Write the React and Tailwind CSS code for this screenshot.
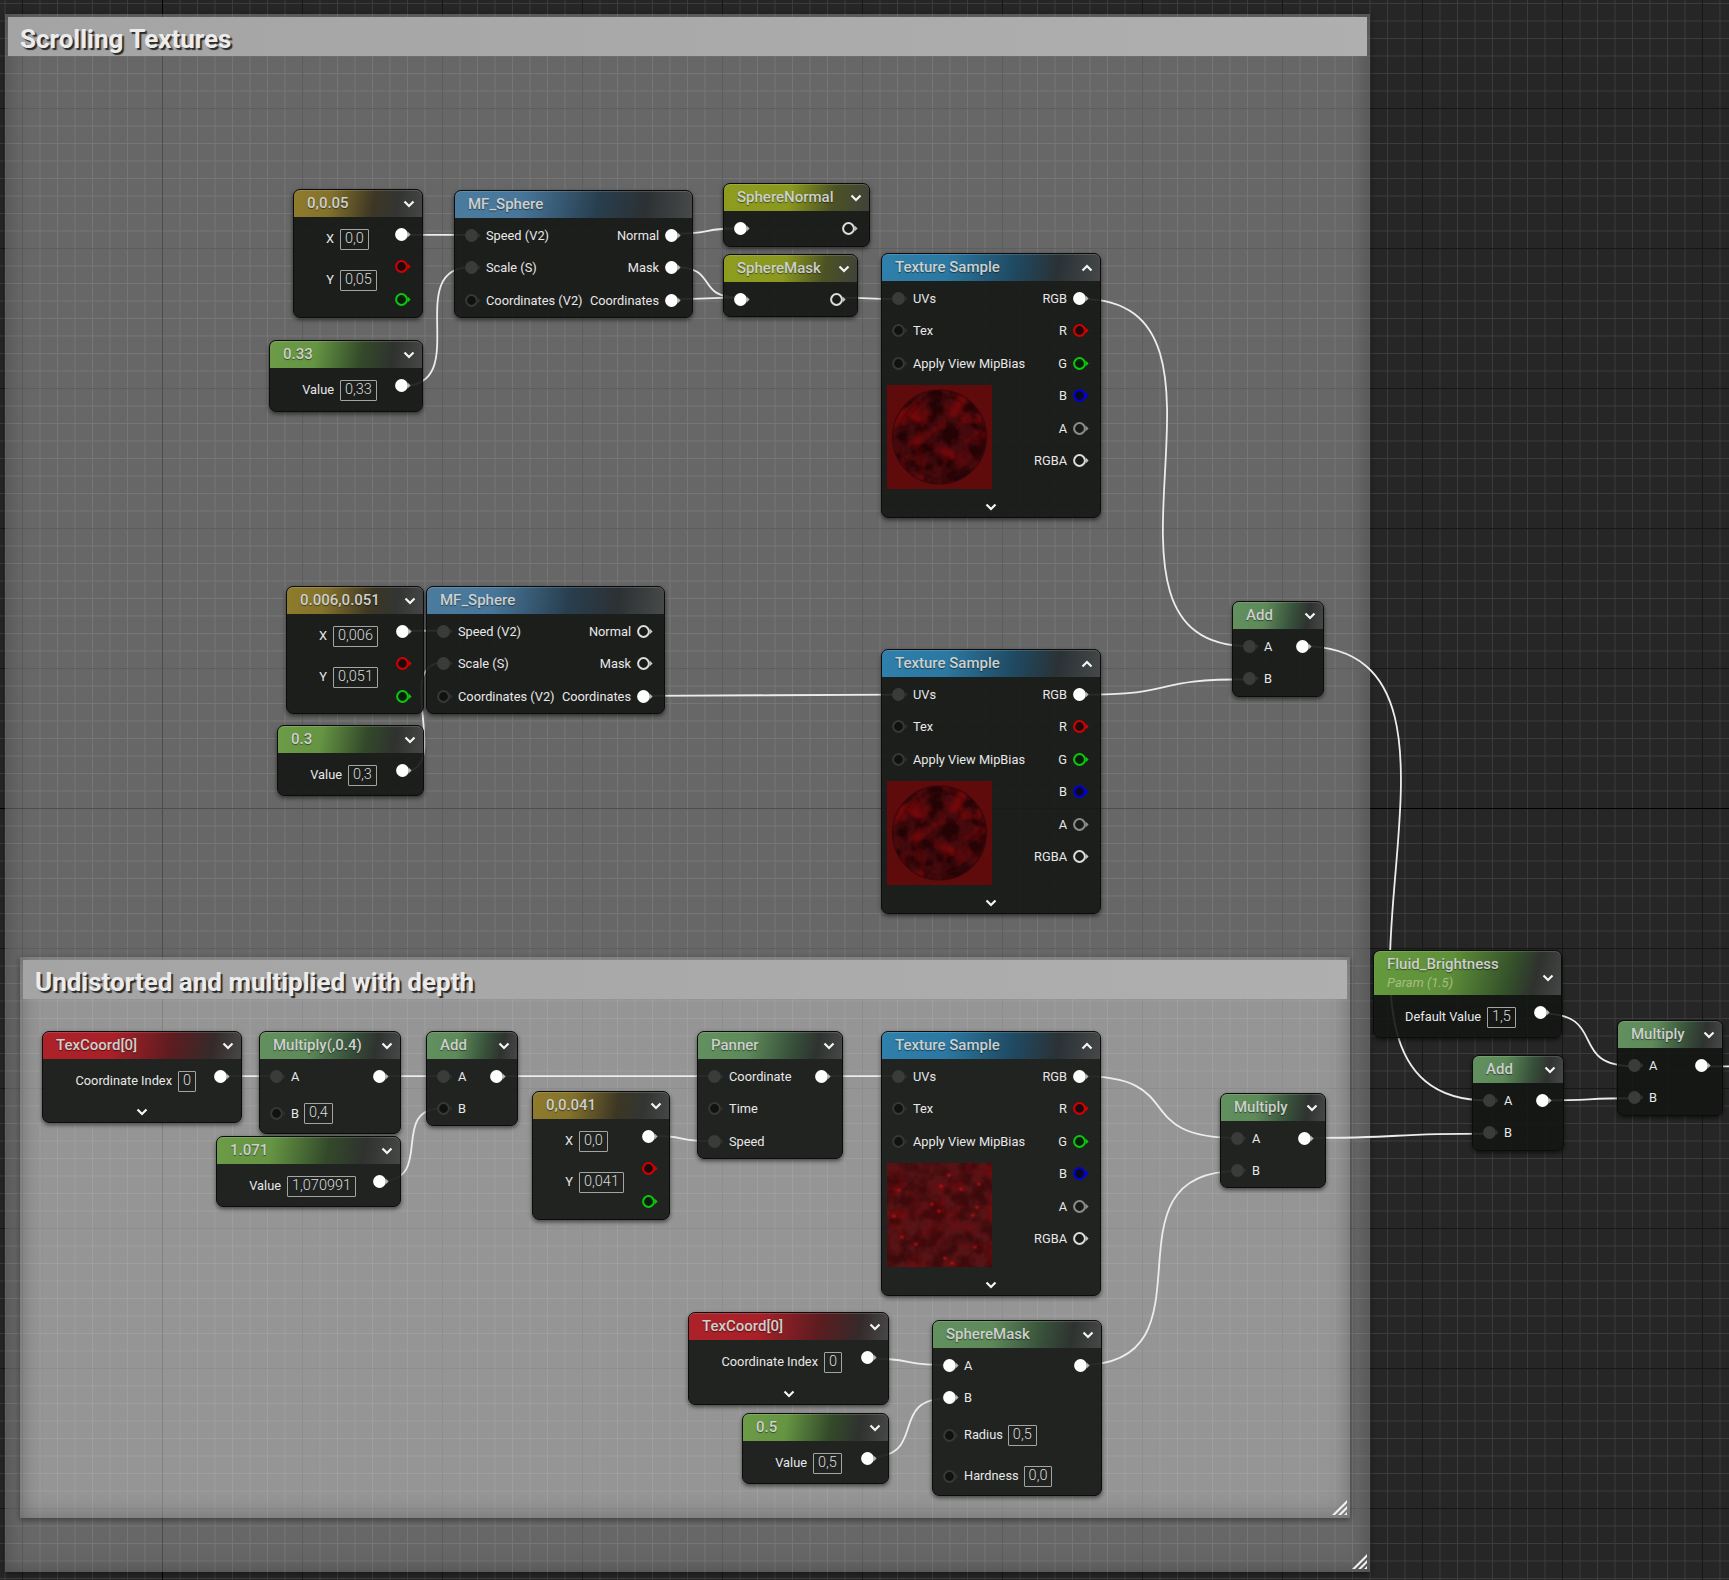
import React from 'react';

const pinStyles = {
  white: { fill: '#ffffff', stroke: '#ffffff', nub: '#b5b5b5' },
  ring: { fill: '#191b1a', stroke: '#dcdcdc', nub: '#c4c4c4' },
  red: { fill: '#1c0a0a', stroke: '#d40000', nub: '#d40000' },
  green: { fill: '#0a1c0a', stroke: '#0cc80c', nub: '#0cc80c' },
  blue: { fill: '#0a0a1c', stroke: '#0000dc', nub: '#0000dc' },
  gray: { fill: '#191b1a', stroke: '#8c8c8c', nub: '#8c8c8c' },
  dim: { fill: '#3a3c3b', stroke: '#3a3c3b', nub: '#2e302f' },
  dark: { fill: '#101211', stroke: '#363837', nub: '#2e302f' },
};

const headerStyles = {
  yellow: 'bg-[linear-gradient(100deg,#8f7c2c_0%,#84722c_28%,#3c3624_62%,#333533_80%,#454746_100%)]',
  green: 'bg-[linear-gradient(100deg,#6c9c48_0%,#659442_30%,#334a2a_60%,#2f322e_80%,#464847_100%)]',
  olive: 'bg-[linear-gradient(100deg,#8e9c1e_0%,#8a9820_45%,#4c5224_75%,#3f423a_100%)]',
  steel: 'bg-[linear-gradient(100deg,#4b7c9e_0%,#47769a_28%,#283e4e_60%,#2c3134_80%,#484a4a_100%)]',
  blue: 'bg-[linear-gradient(100deg,#2f80ab_0%,#2b78a2_30%,#1f4a62_60%,#2a3236_80%,#464848_100%)]',
  red: 'bg-[linear-gradient(100deg,#ad2229_0%,#a82028_35%,#5c1c20_65%,#352a2a_85%,#474747_100%)]',
  math: 'bg-[linear-gradient(100deg,#62905e_0%,#5e8a5a_35%,#37503a_65%,#2f3330_82%,#464847_100%)]',
  param: 'bg-[linear-gradient(105deg,#659a3e_0%,#5f9039_40%,#33502a_72%,#2f322e_85%,#454746_100%)]',
};

const X = 'w-[40px]';
const V = 'w-[64px]';

const texOuts = [
  { label: 'RGB', pin: 'white' },
  { label: 'R', pin: 'red' },
  { label: 'G', pin: 'green' },
  { label: 'B', pin: 'blue' },
  { label: 'A', pin: 'gray' },
  { label: 'RGBA', pin: 'ring' },
];

const texIns = [
  { pin: 'dim', label: 'UVs' },
  { pin: 'dark', label: 'Tex' },
  { pin: 'dark', label: 'Apply View MipBias' },
];

const nodes = [
  { title: '0,0.05', color: 'yellow', box: 'left-[293px] top-[189px] w-[130px] h-[129px]',
    left: [{ label: 'X', value: '0,0', w: X }, { label: 'Y', value: '0,05', w: X }],
    right: [{ pin: 'white' }, { pin: 'red' }, { pin: 'green' }] },
  { title: '0.33', color: 'green', box: 'left-[269px] top-[340px] w-[154px] h-[72px]',
    left: [{ label: 'Value', value: '0,33', w: V }], right: [{ pin: 'white' }] },
  { title: 'MF_Sphere', color: 'steel', noArrow: true, box: 'left-[454px] top-[190px] w-[239px] h-[128px]',
    left: [{ pin: 'dim', label: 'Speed (V2)' }, { pin: 'dim', label: 'Scale (S)' }, { pin: 'dark', label: 'Coordinates (V2)' }],
    right: [{ label: 'Normal', pin: 'white' }, { label: 'Mask', pin: 'white' }, { label: 'Coordinates', pin: 'white' }] },
  { title: 'SphereNormal', color: 'olive', box: 'left-[723px] top-[183px] w-[147px] h-[64px]',
    left: [{ pin: 'white' }], right: [{ pin: 'ring' }] },
  { title: 'SphereMask', color: 'olive', box: 'left-[723px] top-[254px] w-[135px] h-[63px]',
    left: [{ pin: 'white' }], right: [{ pin: 'ring' }] },
  { title: 'Texture Sample', color: 'blue', up: true, more: true, preview: 'sphere', box: 'left-[881px] top-[253px] w-[220px] h-[265px]',
    left: texIns, right: texOuts },

  { title: '0.006,0.051', color: 'yellow', box: 'left-[286px] top-[586px] w-[138px] h-[128px]',
    left: [{ label: 'X', value: '0,006', w: X }, { label: 'Y', value: '0,051', w: X }],
    right: [{ pin: 'white' }, { pin: 'red' }, { pin: 'green' }] },
  { title: 'MF_Sphere', color: 'steel', noArrow: true, box: 'left-[426px] top-[586px] w-[239px] h-[128px]',
    left: [{ pin: 'dim', label: 'Speed (V2)' }, { pin: 'dim', label: 'Scale (S)' }, { pin: 'dark', label: 'Coordinates (V2)' }],
    right: [{ label: 'Normal', pin: 'ring' }, { label: 'Mask', pin: 'ring' }, { label: 'Coordinates', pin: 'white' }] },
  { title: '0.3', color: 'green', box: 'left-[277px] top-[725px] w-[147px] h-[71px]',
    left: [{ label: 'Value', value: '0,3', w: V }], right: [{ pin: 'white' }] },
  { title: 'Texture Sample', color: 'blue', up: true, more: true, preview: 'sphere', box: 'left-[881px] top-[649px] w-[220px] h-[265px]',
    left: texIns, right: texOuts },
  { title: 'Add', color: 'math', box: 'left-[1232px] top-[601px] w-[92px] h-[96px]',
    left: [{ pin: 'dim', label: 'A' }, { pin: 'dim', label: 'B' }], right: [{ pin: 'white' }] },

  { title: 'Fluid_Brightness', subtitle: 'Param (1.5)', color: 'param', box: 'left-[1373px] top-[950px] w-[189px] h-[88px]',
    left: [{ label: 'Default Value', value: '1,5', w: 'w-[107px]' }], right: [{ pin: 'white' }] },
  { title: 'TexCoord[0]', color: 'red', more: true, box: 'left-[42px] top-[1031px] w-[200px] h-[92px]',
    left: [{ label: 'Coordinate Index', value: '0', w: 'w-[129px]' }], right: [{ pin: 'white' }] },
  { title: 'Multiply(,0.4)', color: 'math', box: 'left-[259px] top-[1031px] w-[142px] h-[103px]',
    left: [{ pin: 'dim', label: 'A' }, { pin: 'dark', label: 'B', value: '0,4' }], right: [{ pin: 'white' }] },
  { title: '1.071', color: 'green', box: 'left-[216px] top-[1136px] w-[185px] h-[71px]',
    left: [{ label: 'Value', value: '1,070991', w: V }], right: [{ pin: 'white' }] },
  { title: 'Add', color: 'math', box: 'left-[426px] top-[1031px] w-[92px] h-[95px]',
    left: [{ pin: 'dim', label: 'A' }, { pin: 'dark', label: 'B' }], right: [{ pin: 'white' }] },
  { title: '0,0.041', color: 'yellow', box: 'left-[532px] top-[1091px] w-[138px] h-[129px]',
    left: [{ label: 'X', value: '0,0', w: X }, { label: 'Y', value: '0,041', w: X }],
    right: [{ pin: 'white' }, { pin: 'red' }, { pin: 'green' }] },
  { title: 'Panner', color: 'math', box: 'left-[697px] top-[1031px] w-[146px] h-[128px]',
    left: [{ pin: 'dim', label: 'Coordinate' }, { pin: 'dark', label: 'Time' }, { pin: 'dim', label: 'Speed' }], right: [{ pin: 'white' }] },
  { title: 'Texture Sample', color: 'blue', up: true, more: true, preview: 'mottled', box: 'left-[881px] top-[1031px] w-[220px] h-[265px]',
    left: texIns, right: texOuts },
  { title: 'Multiply', color: 'math', box: 'left-[1220px] top-[1093px] w-[106px] h-[95px]',
    left: [{ pin: 'dim', label: 'A' }, { pin: 'dim', label: 'B' }], right: [{ pin: 'white' }] },
  { title: 'Add', color: 'math', box: 'left-[1472px] top-[1055px] w-[92px] h-[96px]',
    left: [{ pin: 'dim', label: 'A' }, { pin: 'dim', label: 'B' }], right: [{ pin: 'white' }] },
  { title: 'Multiply', color: 'math', box: 'left-[1617px] top-[1020px] w-[106px] h-[96px]',
    left: [{ pin: 'dim', label: 'A' }, { pin: 'dim', label: 'B' }], right: [{ pin: 'white' }] },
  { title: 'TexCoord[0]', color: 'red', more: true, box: 'left-[688px] top-[1312px] w-[201px] h-[93px]',
    left: [{ label: 'Coordinate Index', value: '0', w: 'w-[129px]' }], right: [{ pin: 'white' }] },
  { title: '0.5', color: 'green', box: 'left-[742px] top-[1413px] w-[147px] h-[71px]',
    left: [{ label: 'Value', value: '0,5', w: V }], right: [{ pin: 'white' }] },
  { title: 'SphereMask', color: 'math', box: 'left-[932px] top-[1320px] w-[170px] h-[176px]',
    left: [{ pin: 'white', label: 'A' }, { pin: 'white', label: 'B' }, { pin: 'dark', label: 'Radius', value: '0,5' }, { pin: 'dark', label: 'Hardness', value: '0,0' }],
    right: [{ pin: 'white' }] },
];

// wire ends were measured on the 1568px wide overview, k brings them to page pixels
const k = 1729 / 1568;
const wires = [
  [365, 213, 428, 213], [365, 350, 428, 242], [610, 212, 672, 207], [610, 242, 672, 270],
  [610, 271, 672, 270], [760, 270, 815, 271], [980, 271, 1133, 586], [365, 572, 402, 572],
  [365, 700, 402, 601], [584, 631, 815, 630], [980, 630, 1133, 616], [1181, 586, 1350, 998],
  [1397, 919, 1483, 967], [1399, 998, 1483, 996], [1183, 1032, 1350, 1028], [200, 976, 251, 976],
  [345, 976, 402, 976], [345, 1071, 402, 1005], [450, 976, 648, 976], [589, 1030, 648, 1035],
  [745, 976, 815, 976], [980, 976, 1122, 1032], [786, 1232, 861, 1238], [786, 1322, 861, 1268],
  [980, 1238, 1122, 1062], [1543, 967, 1575, 967],
];

// bright specks on the lower texture preview
const specks = [
  [62, 12], [54, 23], [74, 26], [92, 21], [52, 48], [90, 44], [86, 52], [7, 53], [12, 27],
  [29, 81], [58, 95], [65, 100], [88, 84], [15, 74], [45, 41],
];

const wirePath = ([x1, y1, x2, y2]) => {
  const d = (Math.abs(x2 - x1) * 0.6 + Math.abs(y2 - y1) * 0.25) * k;
  const [a, b, c, e] = [x1 * k, y1 * k, x2 * k, y2 * k];
  return `M${a} ${b}C${a + d} ${b} ${c - d} ${e} ${c} ${e}`;
};

const Pin = ({ kind }) => {
  const s = pinStyles[kind];
  return (
    <svg width="16" height="13" viewBox="0 0 16 13" className="shrink-0">
      <circle cx="6.5" cy="6.5" r="5.4" fill={s.fill} stroke={s.stroke} strokeWidth="2" />
      <path d="M12.6 3.6L15.6 6.5L12.6 9.4Z" fill={s.nub} />
    </svg>
  );
};

const Chevron = ({ up, className }) => (
  <svg width="12" height="8" viewBox="0 0 12 8" className={className}>
    <path d={up ? 'M1.5 6.5L6 2L10.5 6.5' : 'M1.5 1.5L6 6L10.5 1.5'} fill="none" stroke="#f4f4f4" strokeWidth="2.2" />
  </svg>
);

const ValueBox = ({ value }) => (
  <span className="flex h-[21px] items-center rounded-[1px] border border-[#a4a4a4] px-[4px] text-[14.5px] font-light leading-none text-[#dadada]">
    {value}
  </span>
);

const LeftRow = ({ pin, label, value, w }) => (
  <div className={`flex items-center ${value ? 'h-[41px] pt-[1px]' : 'h-[32.5px]'} ${pin ? 'gap-[5px] pl-[10px]' : 'gap-[6px]'}`}>
    {pin && <Pin kind={pin} />}
    {label && <span className={`whitespace-nowrap text-[12.8px] text-[#e8e8e8] ${w ? `${w} text-right` : ''}`}>{label}</span>}
    {value && <ValueBox value={value} />}
  </div>
);

const RightRow = ({ pin, label }) => (
  <div className="flex h-[32.5px] items-center gap-[6px] pr-[11px]">
    {label && <span className="whitespace-nowrap text-[12.8px] text-[#e8e8e8]">{label}</span>}
    <Pin kind={pin} />
  </div>
);

const Preview = ({ kind }) => {
  const sphere = kind === 'sphere';
  const id = `noise-${kind}`;
  return (
    <svg width="105" height="104" viewBox="0 0 105 104" className="ml-[5px] mt-[5px] block">
      <defs>
        <filter id={`${id}-dark`} x="0" y="0" width="100%" height="100%" colorInterpolationFilters="sRGB">
          <feTurbulence type="fractalNoise" baseFrequency="0.07" numOctaves="3" seed={sphere ? 4 : 9} />
          <feColorMatrix values="0 0 0 0 0.14  0 0 0 0 0.01  0 0 0 0 0.02  3 0 0 0 -1.1" />
        </filter>
        <filter id={`${id}-red`} x="0" y="0" width="100%" height="100%" colorInterpolationFilters="sRGB">
          <feTurbulence type="fractalNoise" baseFrequency="0.05" numOctaves="3" seed={sphere ? 11 : 23} />
          <feColorMatrix values="0 0 0 0 0.5  0 0 0 0 0.03  0 0 0 0 0.04  3.4 0 0 0 -1.6" />
        </filter>
        <filter id={`${id}-soft`}>
          <feGaussianBlur stdDeviation="0.8" />
        </filter>
        <clipPath id={`${id}-clip`}>
          <circle cx="52.5" cy="52" r="47" />
        </clipPath>
      </defs>
      {sphere ? (
        <>
          <rect width="105" height="104" fill="#600b0b" />
          <circle cx="52.5" cy="52" r="47" fill="#460a0d" />
          <rect width="105" height="104" filter={`url(#${id}-dark)`} clipPath={`url(#${id}-clip)`} />
          <rect width="105" height="104" filter={`url(#${id}-red)`} clipPath={`url(#${id}-clip)`} opacity="0.8" />
          <circle cx="52.5" cy="52" r="47" fill="none" stroke="#360709" strokeWidth="1.5" opacity="0.7" />
          <circle cx="52.5" cy="52" r="41" fill="none" stroke="#3a0709" strokeWidth="1.2" opacity="0.45" />
        </>
      ) : (
        <>
          <rect width="105" height="104" fill="#571315" />
          <rect width="105" height="104" filter={`url(#${id}-red)`} opacity="0.55" />
          <rect width="105" height="104" filter={`url(#${id}-dark)`} opacity="0.5" />
          <g filter={`url(#${id}-soft)`}>
            {specks.map(([cx, cy], i) => <circle key={i} cx={cx} cy={cy} r="1.6" fill="#d01212" />)}
          </g>
        </>
      )}
    </svg>
  );
};

const Node = ({ node }) => (
  <div className={`absolute ${node.box} flex flex-col rounded-[7px] border border-[#0c0c0c] bg-[#141614]/90 shadow-[0_2px_4px_rgba(0,0,0,0.55)]`}>
    <div className={`flex shrink-0 items-center justify-between rounded-t-[6px] shadow-[inset_0_1px_0_rgba(255,255,255,0.14)] ${headerStyles[node.color]} ${node.subtitle ? 'h-[44px]' : 'h-[27px]'} pl-[13px] pr-[7px]`}>
      <div className="-mt-[1px] flex flex-col">
        <span className="whitespace-nowrap text-[15px] font-medium leading-[20px] text-[#cdd0cd] [text-shadow:0_1px_1px_rgba(0,0,0,0.5)]">{node.title}</span>
        {node.subtitle && <span className="text-[13px] italic leading-[18px] text-[#a4bd82]">{node.subtitle}</span>}
      </div>
      {!node.noArrow && <Chevron up={node.up} className={node.subtitle ? 'mt-[9px]' : ''} />}
    </div>
    <div className="flex justify-between pt-[1px]">
      <div className="flex flex-col">
        {node.left.map((row, i) => <LeftRow key={i} {...row} />)}
        {node.preview && <Preview kind={node.preview} />}
      </div>
      <div className="flex flex-col items-end">
        {node.right.map((row, i) => <RightRow key={i} {...row} />)}
      </div>
    </div>
    {node.more && (
      <div className="mt-auto flex justify-center pb-[6px]">
        <Chevron />
      </div>
    )}
  </div>
);

const Grip = () => (
  <svg width="15" height="15" viewBox="0 0 15 15" className="absolute bottom-[3px] right-[3px]">
    <path d="M0 15L15 0V3L3 15ZM6 15L15 6V9L9 15ZM12 15L15 12V15Z" fill="#f2f2f2" />
  </svg>
);

const Comment = ({ box, titleBox, title }) => (
  <div className={`absolute ${box} bg-white/30 shadow-[inset_0_0_22px_rgba(0,0,0,0.28),0_2px_6px_rgba(0,0,0,0.4)]`}>
    <div className={`mx-[3px] mt-[3px] flex items-center pt-[6px] ${titleBox} bg-[linear-gradient(90deg,#a4a4a4,#afafaf)]`}>
      <span className="whitespace-nowrap text-[26px] font-bold text-[#ececec] [text-shadow:2px_2px_1px_#2a2a2a]">{title}</span>
    </div>
    <Grip />
  </div>
);

const App = () => {
  return (
    <div className="relative h-[1580px] w-[1729px] overflow-hidden bg-[#262626] bg-[linear-gradient(to_right,#000_1px,transparent_1px),linear-gradient(to_bottom,#000_1px,transparent_1px),linear-gradient(to_right,#171717_1px,transparent_1px),linear-gradient(to_bottom,#171717_1px,transparent_1px),linear-gradient(to_right,#3c3c3c_1px,transparent_1px),linear-gradient(to_bottom,#3c3c3c_1px,transparent_1px)] [background-size:1729px_1580px,1729px_1580px,140px_140px,140px_140px,17.5px_17.5px,17.5px_17.5px] [background-position:162px_0,0_808px,22px_0,0_108px,4.5px_0,0_3px] [background-repeat:no-repeat,no-repeat,repeat,repeat,repeat,repeat] font-[Roboto,sans-serif]">
      <Comment box="left-[5px] top-[14px] w-[1365px] h-[1558px]" titleBox="h-[39px] pl-[12px]" title="Scrolling Textures" />
      <Comment box="left-[20px] top-[957px] w-[1330px] h-[561px]" titleBox="h-[39px] pl-[12px]" title="Undistorted and multiplied with depth" />

      <svg width="1729" height="1580" className="absolute inset-0">
        {wires.map((w, i) => (
          <path key={i} d={wirePath(w)} fill="none" stroke="#ececec" strokeWidth="1.8" />
        ))}
      </svg>

      {nodes.map((node, i) => <Node key={i} node={node} />)}
    </div>
  );
};

export default App;
